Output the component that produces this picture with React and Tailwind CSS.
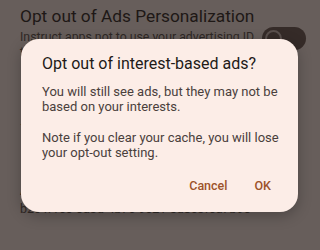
export default function App() {
  return (
    <div className="relative w-[320px] h-[250px] overflow-hidden bg-[#675e5b]" style={{ fontFamily: "Roboto, 'Liberation Sans', sans-serif" }}>
      {/* page under the scrim */}
      <div className="flex px-5 pt-[5px]">
        <div className="flex-1">
          <div className="text-[17.3px] leading-[22px] text-[#1e1816]">Opt out of Ads Personalization</div>
          <div className="text-[12.3px] leading-[15px] text-[#2f2825] mt-[3px] whitespace-nowrap">Instruct apps not to use your advertising ID</div>
          <div className="text-[12.3px] leading-[15px] text-[#2f2825]">to build profiles or show you</div>
          <div className="h-[58px]" />
          <div className="text-[12.3px] leading-[15px] text-[#2f2825]">—</div>
          <div className="h-[51px]" />
          <div className="text-[12.3px] leading-[15px] text-[#2f2825]">Advertising ID</div>
          <div className="text-[12.5px] leading-[15px] text-[#2f2825] mt-[2px] whitespace-nowrap">b2c4f1e6-0a3d-4b7e-9c21-5d8e3f6a7b90</div>
        </div>
      </div>
      <div className="absolute left-[262px] top-[27px] w-[44px] h-[23px] rounded-full bg-[#352b28] flex items-center pl-[3px]">
        <div className="w-[17px] h-[17px] rounded-full border-2 border-[#5a504d]" />
      </div>

      {/* dialog */}
      <div className="absolute left-[21px] top-[39px] w-[277px] h-[173px] rounded-[18px] bg-[#fcede7] shadow-[0_4px_14px_rgba(0,0,0,0.25)] pl-[21px] pr-[18px] pt-[14px]">
        <div className="text-[16px] leading-[22px] text-[#221a17]">Opt out of interest-based ads?</div>
        <div className="mt-[9px] text-[13px] leading-[15px] text-[#4a403c]">
          You will still see ads, but they may not be based on your interests.
        </div>
        <div className="mt-[16px] text-[13px] leading-[15px] text-[#4a403c]">
          Note if you clear your cache, you will lose your opt-out setting.
        </div>
        <div className="flex justify-end gap-[27px] mt-[18px] pr-[9px] text-[12.5px] leading-[16px] font-medium text-[#9c532a]">
          <span>Cancel</span>
          <span>OK</span>
        </div>
      </div>
    </div>
  );
}
